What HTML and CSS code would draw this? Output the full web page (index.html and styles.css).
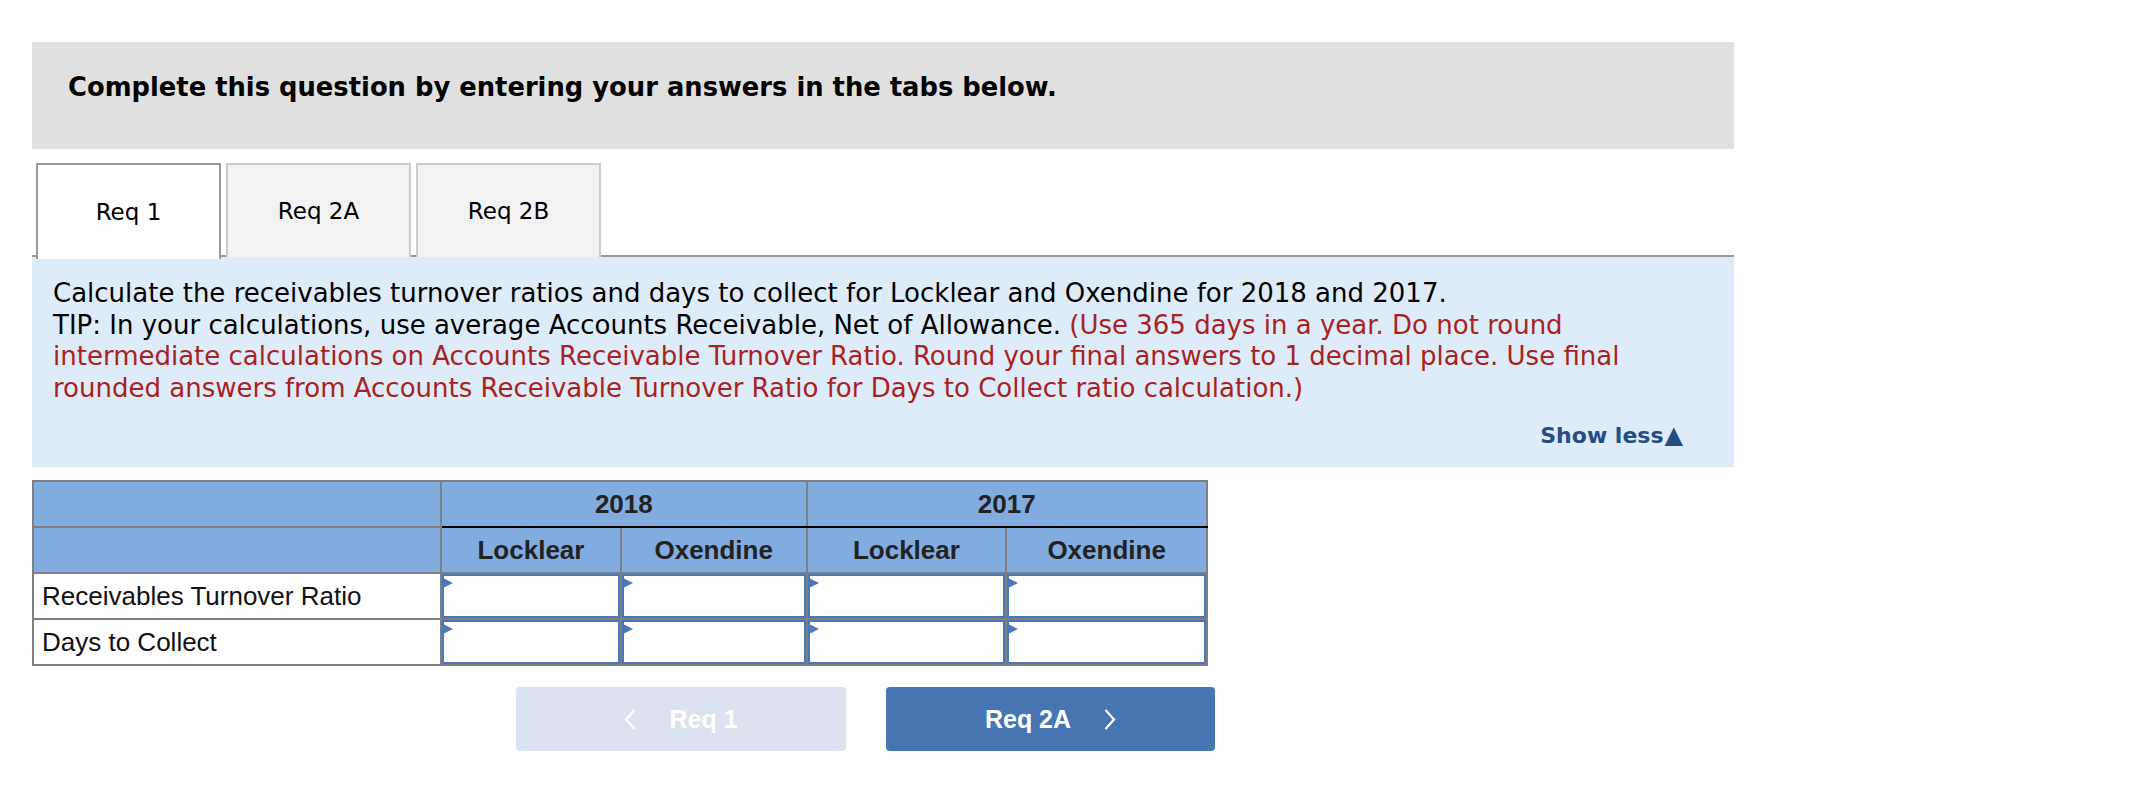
FILE: index.html
```html
<!DOCTYPE html>
<html>

<head>
    <meta charset="utf-8">
    <title>Req 1</title>

    <link rel="stylesheet" href="styles.css">
</head>

<body>

    <div class="question">
        <div class="banner">
            <h3>Complete this question by entering your answers in the tabs below.</h3>
        </div>

        <div class="tabs">
            <div class="tab active">Req 1</div>
            <div class="tab">Req 2A</div>
            <div class="tab">Req 2B</div>
        </div>

        <div class="instructions">
            <p>Calculate the receivables turnover ratios and days to collect for Locklear and Oxendine for 2018 and 2017.<br>
                TIP: In your calculations, use average Accounts Receivable, Net of Allowance. <span class="red">(Use 365 days in a year. Do not round intermediate calculations on Accounts Receivable Turnover Ratio. Round your final answers to 1 decimal place. Use final rounded answers from Accounts Receivable Turnover Ratio for Days to Collect ratio calculation.)</span></p>
            <div class="show_less">Show less<span class="arrow">&#9650;</span></div>
        </div>

        <table class="answer_table">
            <tr class="head">
                <th class="label_col"></th>
                <th colspan="2" class="year">2018</th>
                <th colspan="2" class="year">2017</th>
            </tr>
            <tr class="head">
                <th class="label_col"></th>
                <th class="c1">Locklear</th>
                <th class="c2">Oxendine</th>
                <th class="c3">Locklear</th>
                <th class="c4">Oxendine</th>
            </tr>
            <tr>
                <td class="row_label">Receivables Turnover Ratio</td>
                <td class="cell"><input type="text"></td>
                <td class="cell"><input type="text"></td>
                <td class="cell"><input type="text"></td>
                <td class="cell"><input type="text"></td>
            </tr>
            <tr>
                <td class="row_label">Days to Collect</td>
                <td class="cell"><input type="text"></td>
                <td class="cell"><input type="text"></td>
                <td class="cell"><input type="text"></td>
                <td class="cell"><input type="text"></td>
            </tr>
        </table>

        <div class="nav">
            <button class="nav_btn prev" disabled>
                <svg width="12" height="21" viewBox="0 0 12 21"><path d="M10.5 1 L2 10.5 L10.5 20" fill="none" stroke="#fff" stroke-width="2.2"/></svg>
                <span>Req 1</span>
            </button>
            <button class="nav_btn next">
                <span>Req 2A</span>
                <svg width="12" height="21" viewBox="0 0 12 21"><path d="M1.5 1 L10 10.5 L1.5 20" fill="none" stroke="#fff" stroke-width="2.2"/></svg>
            </button>
        </div>
    </div>

</body>

</html>
```

FILE: styles.css
```css
* {
    box-sizing: border-box;
}

body {
    margin: 0;
    background-color: #ffffff;
    font-family: "DejaVu Sans", Verdana, sans-serif;
    color: #000000;
}

.question {
    width: 1702px;
    margin: 42px 0 0 32px;
}

.banner {
    height: 107px;
    background-color: #e0e0e0;
    padding: 29px 36px 0 36px;
}

.banner h3 {
    margin: 0;
    font-size: 25.8px;
    line-height: 32px;
    font-weight: bold;
}

.tabs {
    display: flex;
    gap: 5px;
    height: 94px;
    margin-top: 14px;
    padding-left: 4px;
    border-bottom: 2px solid #999999;
}

.tab {
    width: 185px;
    height: 94px;
    border: 2px solid #cccccc;
    border-bottom: none;
    background-color: #f2f2f2;
    font-size: 23px;
    display: flex;
    align-items: center;
    justify-content: center;
}

.tab.active {
    height: 96px;
    background-color: #ffffff;
    border-color: #999999;
}

.instructions {
    background-color: #deebf8;
    height: 210px;
    padding: 21px 71px 0 21px;
}

.instructions p {
    margin: 0;
    font-size: 26px;
    line-height: 31.5px;
}

.red {
    color: #a8231f;
}

.show_less {
    margin-top: 16px;
    margin-right: -20px;
    text-align: right;
    font-size: 22px;
    line-height: 31px;
    font-weight: bold;
    color: #244d86;
}

.show_less .arrow {
    font-size: 24px;
    margin-left: 1px;
}

.answer_table {
    margin-top: 13px;
    border-collapse: collapse;
    width: 1176px;
    font-family: "Liberation Sans", Arial, sans-serif;
    font-size: 26px;
}

.answer_table th,
.answer_table td {
    border: 2px solid #7f7f7f;
    height: 46px;
    padding: 0;
}

.answer_table th {
    background-color: #82abdf;
    color: #222222;
    font-weight: bold;
    text-align: center;
}

.label_col {
    width: 409px;
}

.year {
    border-bottom-color: #000000 !important;
}

.c1 { width: 180px; }
.c2 { width: 186px; }
.c3 { width: 200px; }
.c4 { width: 201px; }

.row_label {
    padding-left: 8px !important;
    color: #111111;
}

.cell {
    position: relative;
}

.cell input {
    display: block;
    width: 100%;
    height: 44px;
    margin: 0;
    border: 2px solid #4a77b7;
    outline: none;
    font-size: 22px;
}

.cell::before {
    content: "";
    position: absolute;
    left: 1px;
    top: 4px;
    border-left: 10px solid #4a77b7;
    border-top: 5.5px solid transparent;
    border-bottom: 5.5px solid transparent;
}

.nav {
    display: flex;
    gap: 40px;
    margin: 21px 0 0 484px;
}

.nav_btn {
    width: 330px;
    height: 64px;
    border: none;
    border-radius: 4px;
    color: #ffffff;
    font-family: "Liberation Sans", Arial, sans-serif;
    font-size: 25px;
    font-weight: bold;
    display: flex;
    align-items: center;
    justify-content: center;
    gap: 33px;
    cursor: pointer;
}

.prev {
    background-color: #dae3ef;
    cursor: default;
}

.next {
    width: 329px;
    background-color: #4774b3;
}
```
